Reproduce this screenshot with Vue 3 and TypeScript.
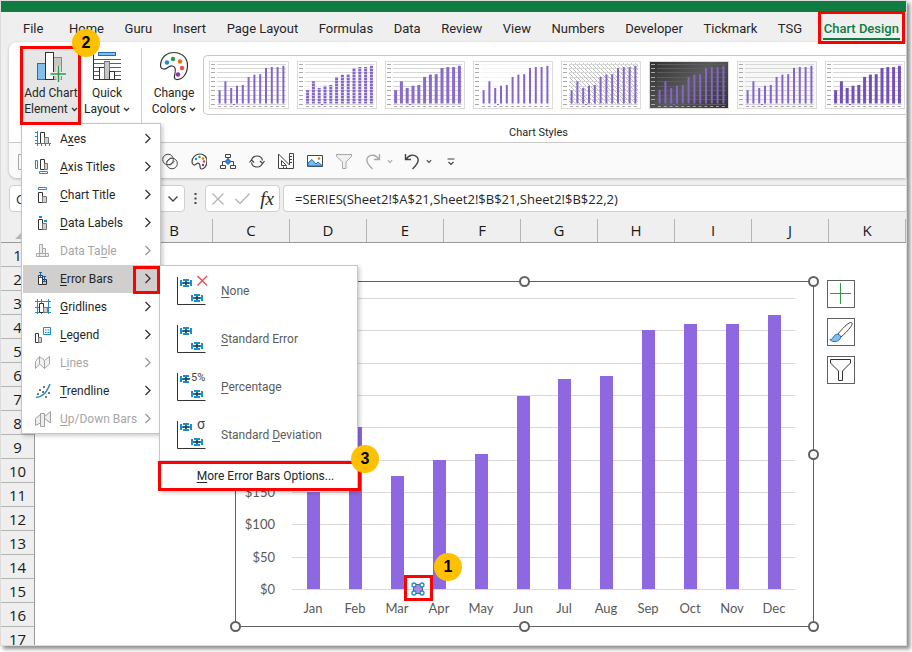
<script setup lang="ts">
interface MenuItem { before: string; key: string; after: string; icon: string; disabled?: boolean; open?: boolean }
interface SubItem { before: string; key: string; after: string; mark: 'cross' | 'none' | 'percent' | 'sigma' }
interface ThumbStyle { name: string; kind: string; barWidth: number }

const tabs: string[] = ['File', 'Home', 'Guru', 'Insert', 'Page Layout', 'Formulas', 'Data', 'Review', 'View', 'Numbers', 'Developer', 'Tickmark', 'TSG']

const icons: Record<string, string> = {
  axes: `<path d="M2.5 0v15M0 12.500H16M0 1.500H3M0 5.500H3M0 9.500H3M6.500 12V15M10.500 12V15M14.500 12V15" stroke="#1e8bcd" fill="none"/><path d="M5.500 12V1.500H9.500V12" fill="#fff" stroke="#333"/><path d="M9.500 12V6.500H13.500V12" fill="#d0d0d0" stroke="#777"/>`,
  axisTitles: `<path d="M.5 1.500H2.500V9.500H.5ZM4.500 12.500H12.500V14.500H4.500Z" stroke="#1e8bcd" fill="#fff"/><path d="M5.500 10.500V.5H9.500V10.500Z" fill="#fff" stroke="#333"/><path d="M9.500 10.500V4.500H12.500V10.500Z" fill="#d0d0d0" stroke="#777"/>`,
  chartTitle: `<path d="M3.500 .5H11.500V2.500H3.500Z" stroke="#1e8bcd" fill="#fff"/><path d="M3.500 15.500V5.500H7.500V15.500Z" fill="#fff" stroke="#333"/><path d="M7.500 15.500V9.500H11.500V15.500Z" fill="#d0d0d0" stroke="#777"/>`,
  dataLabels: `<path d="M4 1H7V3H4ZM9 5H12V7H9Z" fill="#1e8bcd"/><path d="M3.500 14.500V4.500H7.500V14.500Z" fill="#fff" stroke="#333"/><path d="M7.500 14.500V8.500H11.500V14.500Z" fill="#d0d0d0" stroke="#777"/>`,
  dataTable: `<path d="M4.500 10.500V1.500H7.500V10.500ZM7.500 10.500V5.500H10.500V10.500ZM1.500 10.500H13.500V13.500H1.500ZM4.500 10.500V13.500M10.500 10.500V13.500" fill="#eee" stroke="#aaa"/>`,
  errorBars: `<path d="M3.500 13.500V4.500H7.500V13.500Z" fill="#fff" stroke="#333"/><path d="M7.500 13.500V8.500H11.500V13.500Z" fill="#c4c4c4" stroke="#333"/><path d="M5.500 1V7M4 1.500H7M4 6.500H7M9.500 5V11M8 5.500H11M8 10.500H11" stroke="#185fae"/>`,
  gridlines: `<path d="M2.500 0V15M6.500 0V15M13.500 0V15M0 2.500H16M0 8.500H16M0 13.500H16" stroke="#1e8bcd"/><path d="M4.500 13.500V4.500H8.500V13.500Z" fill="#fff" stroke="#333"/><path d="M8.500 13.500V8.500H12.500V13.500Z" fill="#d0d0d0" stroke="#777"/>`,
  legend: `<path d="M.5 15.500V6.500H3.500V15.500Z" fill="#fff" stroke="#333"/><path d="M3.500 15.500V10.500H6.500V15.500Z" fill="#d0d0d0" stroke="#777"/><path d="M8.500 .5H15.500V7.500H8.500Z" fill="#fff" stroke="#1e8bcd"/><path d="M10 3H11.500M12.500 3H14.500M10 5.500H11.500M12.500 5.500H14.500" stroke="#1e8bcd"/>`,
  lines: `<path d="M.5 6.500L4.500 1.500L9.500 5.500L14.500 1.500V9L9.500 13.500L4.500 9L.5 13.500ZM4.500 1.500V9M9.500 5.500V13.500" fill="#f2f2f2" stroke="#a6a6a6"/>`,
  trendline: `<path d="M1 14.500C8 13.500 11.500 10 15 1" fill="none" stroke="#1e8bcd" stroke-width="1.500"/><path d="M2 10H4V12H2ZM4 6H6V8H4ZM8 3H10V5H8ZM7 8H9V10H7ZM10 13H12V15H10ZM13 9H15V11H13Z" fill="#777"/>`,
  upDown: `<path d="M.5 7.500L5.500 3.500V12L.5 14.500ZM5.500 2.500H9.500V15.500H5.500ZM9.500 5.500L15.500 .5V12L9.500 7.500Z" fill="#eee" stroke="#a0a0a0"/>`,
}

const menu: MenuItem[] = [
  { before: 'A', key: 'x', after: 'es', icon: 'axes' },
  { before: '', key: 'A', after: 'xis Titles', icon: 'axisTitles' },
  { before: '', key: 'C', after: 'hart Title', icon: 'chartTitle' },
  { before: '', key: 'D', after: 'ata Labels', icon: 'dataLabels' },
  { before: 'Data Ta', key: 'b', after: 'le', icon: 'dataTable', disabled: true },
  { before: '', key: 'E', after: 'rror Bars', icon: 'errorBars', open: true },
  { before: '', key: 'G', after: 'ridlines', icon: 'gridlines' },
  { before: '', key: 'L', after: 'egend', icon: 'legend' },
  { before: 'L', key: 'i', after: 'nes', icon: 'lines', disabled: true },
  { before: '', key: 'T', after: 'rendline', icon: 'trendline' },
  { before: '', key: 'U', after: 'p/Down Bars', icon: 'upDown', disabled: true },
]

const submenu: SubItem[] = [
  { before: '', key: 'N', after: 'one', mark: 'cross' },
  { before: '', key: 'S', after: 'tandard Error', mark: 'none' },
  { before: '', key: 'P', after: 'ercentage', mark: 'percent' },
  { before: 'Standard ', key: 'D', after: 'eviation', mark: 'sigma' },
]

const quickTools: { name: string; art: string }[] = [
  { name: 'Merge shapes', art: `<circle cx="6" cy="6.500" r="5.300" /><circle cx="10" cy="10.500" r="5.300"/><path d="M4.500 9L9 4.500M8 12.500L12.500 8"/>` },
  { name: 'Colors', art: `<path d="M1 9C1 4 5 1 9 1c4 0 7 3 7 7 0 5-3 8-5.500 8C8 16 10 12 8 10.500 6 9 5 12.500 3 12 1.500 11.500 1 10.500 1 9Z" stroke-width="1.200"/><g stroke="none"><circle cx="5" cy="6" r="1.200" fill="#1e8bcd"/><circle cx="8.500" cy="4" r="1.200" fill="#2b9a4b"/><circle cx="12" cy="5.500" r="1.200" fill="#e8710a"/><circle cx="13" cy="8.500" r="1.200" fill="#e03c31"/><circle cx="12" cy="12" r="1.200" fill="#9131a8"/></g>` },
  { name: 'Hierarchy', art: `<path d="M5.500 1.500h5v3h-5zM.5 12.500h5v3h-5zM10.500 12.500h5v3h-5zM8 4.500v2M2.500 12V8.500H13.500V12"/><path d="M8 5.500L11 8.500 8 11.500 5 8.500Z" fill="#2b88d8" stroke="#1565ad"/>` },
  { name: 'Refresh', art: `<path d="M2.500 7.500C3 4.500 5.500 3 8 3s5 1.500 5.500 4.500M13.500 9.500C13 12.500 10.500 14 8 14s-5-1.500-5.500-4.500M.5 9.500L2.500 7 5 9.500M11 8L13.500 10.500 15.500 8" stroke-width="1.200"/>` },
  { name: 'Ruler', art: `<path d="M.5 1V15.500H15.500V.5H11.500V12L.5 1ZM3.500 7.500V12.500H8.500ZM12 3.500h2M12 6.500h2M12 9.500h2M5.500 13.500v2M8.500 13.500v2"/>` },
  { name: 'Picture', art: `<path d="M.5 2.500h15v11H.5z" fill="#fff"/><path d="M1 13V10L5 6.500 9 11 11 9 15 12.500V13Z" fill="#7db9e8" stroke="#1e6fb8"/><circle cx="12" cy="5.500" r="1.300" fill="#e8710a" stroke="none"/>` },
]

const thumbs: ThumbStyle[] = [
  { name: 'Style 1', kind: 'plain', barWidth: 2 },
  { name: 'Style 2', kind: 'striped', barWidth: 3 },
  { name: 'Style 3', kind: 'wide', barWidth: 3 },
  { name: 'Style 4', kind: 'clean', barWidth: 2 },
  { name: 'Style 5', kind: 'hatched', barWidth: 2 },
  { name: 'Style 6', kind: 'dark', barWidth: 2 },
  { name: 'Style 7', kind: 'soft', barWidth: 2 },
  { name: 'Style 8', kind: 'deep', barWidth: 3 },
]

const sales: { month: string; value: number }[] = [
  { month: 'Jan', value: 150 }, { month: 'Feb', value: 250 }, { month: 'Mar', value: 175 },
  { month: 'Apr', value: 200 }, { month: 'May', value: 209 }, { month: 'Jun', value: 299 },
  { month: 'Jul', value: 325 }, { month: 'Aug', value: 330 }, { month: 'Sep', value: 400 },
  { month: 'Oct', value: 410 }, { month: 'Nov', value: 410 }, { month: 'Dec', value: 424 },
]
const levels = Array.from({ length: 10 }, (_, i) => i * 50)
const base = 308
const yOf = (value: number) => Math.round(base - (value * 291) / 450)
const barX = (i: number) => Math.round(72 + i * 41.9)
const handles = [[0, 0], [289, 0], [578, 0], [0, 173], [578, 173], [0, 345], [289, 345], [578, 345]]
const pointHandles = [[-4, -4], [4, -4], [-4, 4], [4, 4]]

const thumbY = (value: number) => 42.5 - (value * 40) / 450
const columns = ['A', 'B', 'C', 'D', 'E', 'F', 'G', 'H', 'I', 'J', 'K']
</script>

<template>
  <div class="page">
    <div class="window">
      <div class="titlebar"></div>
      <nav class="tabs">
        <a v-for="t in tabs" :key="t" href="#" class="tab">{{ t }}</a>
        <a href="#" class="tab active">Chart Design<span class="callout"></span></a>
      </nav>

      <section class="ribbon">
        <div class="ribbon-main">
          <div class="add-wrap">
            <button class="big pressed">
              <svg width="30" height="32" viewBox="0 0 30 32">
                <rect x="1.500" y="12.500" width="8" height="16" fill="#83beec" stroke="#1e6fb8" />
                <rect x="17.500" y="6.500" width="8" height="22" fill="#c8c6c4" stroke="#8a8886" />
                <rect x="9.500" y="1.500" width="8" height="27" fill="#fff" stroke="#333" />
                <path d="M22.500 15V31M14.500 23H30" stroke="#ececec" stroke-width="4" />
                <path d="M22.500 15V31M14.500 23H30" stroke="#2b9a4b" stroke-width="1.500" />
              </svg>
              <span>Add Chart</span>
              <span>Element <svg class="chev" viewBox="0 0 7 5"><path d="M1 1L3.500 3.500 6 1" /></svg></span>
            </button>
            <span class="callout"></span>
            <span class="badge b2">2</span>

            <ul class="menu">
              <li v-for="m in menu" :key="m.icon" class="menu-item" :class="{ open: m.open }">
                <button class="menu-btn" :disabled="m.disabled">
                  <svg width="16" height="16" viewBox="0 0 16 16" v-html="icons[m.icon]"></svg>
                  <span class="menu-label">{{ m.before }}<u>{{ m.key }}</u>{{ m.after }}</span>
                  <svg class="arrow" width="8" height="11" viewBox="0 0 8 11"><path d="M1.500 1L6 5.500 1.500 10" /></svg>
                </button>
                <template v-if="m.open">
                  <span class="callout"></span>
                  <div class="submenu">
                    <button v-for="s in submenu" :key="s.mark" class="sub-btn">
                      <svg width="32" height="32" viewBox="0 0 32 32">
                        <path d="M.5 2V29.500H28.500" fill="none" stroke="#333" />
                        <g v-for="p in [[3, 4], [14, 19]]" :key="p[0]" :transform="`translate(${p[0]} ${p[1]})`">
                          <path d="M1 1V7M11 1V7M3 1H9M3 7H9M6 1V7M1 4H11" stroke="#1e8bcd" stroke-width="2" fill="none" />
                          <path d="M3 4H9M6 2V6" stroke="#333" />
                        </g>
                        <path v-if="s.mark === 'cross'" d="M20.500 1L30 10.500M30 1L20.500 10.500" stroke="#e8484b" stroke-width="1.300" />
                        <template v-else-if="s.mark === 'percent'">
                          <rect x="13" y="0" width="18" height="13" fill="#fff" />
                          <text x="14" y="10" font-size="11" fill="#444">5%</text>
                        </template>
                        <text v-else-if="s.mark === 'sigma'" x="20" y="10" font-size="14" fill="#444">σ</text>
                      </svg>
                      <span>{{ s.before }}<u>{{ s.key }}</u>{{ s.after }}</span>
                    </button>
                    <div class="more-wrap">
                      <button class="more"><span><u>M</u>ore Error Bars Options...</span></button>
                      <span class="callout"></span>
                      <span class="badge b3">3</span>
                    </div>
                  </div>
                </template>
              </li>
            </ul>
          </div>

          <button class="big">
            <svg width="30" height="32" viewBox="0 0 30 32">
              <path d="M1 8.500H29M1 12.500H29M1 16.500H29M1 20.500H29M1 24.500H29" stroke="#1e6fb8" />
              <rect x="6.500" y="1.500" width="17" height="3" fill="#83beec" stroke="#1e6fb8" />
              <rect x="7.500" y="16.500" width="5" height="12" fill="#fff" stroke="#333" />
              <rect x="12.500" y="10.500" width="5" height="18" fill="#c8c6c4" stroke="#777" />
              <rect x="17.500" y="20.500" width="5" height="8" fill="#fff" stroke="#333" />
              <path d="M1.500 1V28.500H29" fill="none" stroke="#333" />
            </svg>
            <span>Quick</span>
            <span>Layout <svg class="chev" viewBox="0 0 7 5"><path d="M1 1L3.500 3.500 6 1" /></svg></span>
          </button>
          <div class="divider"></div>
          <button class="big colors">
            <svg width="30" height="32" viewBox="0 0 30 32">
              <path d="M1.500 14C2 6 8 1.500 15 1.500c8 0 13.500 5.500 13.500 13C28.500 22 24 29 17.500 28.500c-5-1 .5-7-1.500-11.500-1-2.500-4-2.500-6.500-1C6 19 1.500 19 1.500 14Z" fill="#fafafa" stroke="#333" stroke-width="1.200" />
              <circle cx="8" cy="11.500" r="2.200" fill="#1e8bcd" /><circle cx="14" cy="8" r="2.200" fill="#2b9a4b" />
              <circle cx="21" cy="10.500" r="2.200" fill="#e8710a" /><circle cx="23" cy="17" r="2.200" fill="#f04a4a" />
              <circle cx="19" cy="23.500" r="2.200" fill="#9131a8" />
            </svg>
            <span>Change</span>
            <span>Colors <svg class="chev" viewBox="0 0 7 5"><path d="M1 1L3.500 3.500 6 1" /></svg></span>
          </button>

          <div class="styles">
            <div class="gallery">
              <button v-for="(t, n) in thumbs" :key="t.name" class="thumb" :class="t.kind" :aria-label="t.name">
                <svg width="80" height="48" viewBox="0 0 80 48">
                  <defs>
                    <pattern :id="`hatch${n}`" width="4" height="4" patternUnits="userSpaceOnUse">
                      <path d="M0 0L4 4" stroke="#c4c4c4" stroke-width="1" />
                    </pattern>
                  </defs>
                  <rect v-if="t.kind === 'hatched'" x="8" y="2" width="69" height="41" :fill="`url(#hatch${n})`" />
                  <g class="grid">
                    <rect v-for="l in levels" :key="l" x="8" :y="Math.round(thumbY(l))" width="69" height="1" />
                  </g>
                  <g class="ticks">
                    <rect v-for="l in levels" :key="l" x="2" :y="Math.round(thumbY(l))" width="4" height="1" />
                    <rect v-for="(s, i) in sales" :key="s.month" :x="9 + i * 5.8" y="45" width="3" height="1" />
                  </g>
                  <g class="bars">
                    <rect v-for="(s, i) in sales" :key="s.month" :x="10.600 + i * 5.8 - t.barWidth / 2" :y="thumbY(s.value)" :width="t.barWidth" :height="42.500 - thumbY(s.value)" />
                    <rect x="24" y="43" width="2" height="1" />
                  </g>
                  <path v-if="t.kind === 'striped'" d="M8 16.500H77M8 19.500H77M8 22.500H77M8 25.500H77M8 28.500H77M8 31.500H77M8 34.500H77M8 37.500H77M8 40.500H77M8 13.500H77M8 10.500H77M8 7.500H77" stroke="#fff" stroke-opacity="0.500" />
                </svg>
              </button>
            </div>
            <div class="group-label">Chart Styles</div>
          </div>
        </div>

        <div class="quick">
          <button class="tool first" aria-label="Save"><svg width="16" height="16" viewBox="0 0 16 16"><path d="M.5 .5H13L15.500 3V15.500H.5Z" stroke="#aaa" /></svg></button>
          <button v-for="q in quickTools" :key="q.name" class="tool" :aria-label="q.name">
            <svg width="16" height="17" viewBox="0 0 16 17" v-html="q.art"></svg>
          </button>
          <button class="tool faded" aria-label="Filter"><svg width="16" height="17" viewBox="0 0 16 17"><path d="M.5 1.500H15.500V3.500L10 9V15.500H6.500V9L.5 3.500Z" fill="#f0f0f0" /></svg></button>
          <button class="tool faded" aria-label="Redo"><svg width="16" height="17" viewBox="0 0 16 17"><path d="M14.500 1V6.500H9M14 6.500C11 1.500 6 1 3 4 0 7.500 2 11 7.500 16" stroke-width="1.300" /></svg></button>
          <button class="tool drop faded" aria-label="Redo list"><svg width="7" height="5" viewBox="0 0 7 5"><path d="M1 1L3.500 3.500 6 1" stroke-width="1.300" /></svg></button>
          <button class="tool undo" aria-label="Undo"><svg width="16" height="17" viewBox="0 0 16 17"><path d="M1.500 1V6.500H7M2 6.500C5 1.500 10 1 13 4c3 3.500 1 7-4.500 12" stroke-width="1.400" /></svg></button>
          <button class="tool drop" aria-label="Undo list"><svg width="7" height="5" viewBox="0 0 7 5"><path d="M1 1L3.500 3.500 6 1" stroke-width="1.300" /></svg></button>
          <button class="tool last" aria-label="Customize toolbar"><svg width="8" height="8" viewBox="0 0 8 8"><path d="M.5 1H7.500M1.500 4L4 6.500 6.500 4" stroke-width="1.200" /></svg></button>
        </div>
      </section>

      <section class="formula-row">
        <div class="field name-box">
          <input value="Chart 1" aria-label="Name box" />
          <button aria-label="Names"><svg width="12" height="8" viewBox="0 0 12 8"><path d="M1.500 1.500L6 6 10.500 1.500" stroke="#444" stroke-width="1.400" fill="none" /></svg></button>
        </div>
        <svg class="dots" width="3" height="13" viewBox="0 0 3 13"><path d="M.5 1h2v2h-2zM.5 5.500h2v2h-2zM.5 10h2v2h-2z" fill="#444" /></svg>
        <div class="field fx">
          <button aria-label="Cancel"><svg width="14" height="14" viewBox="0 0 14 14"><path d="M1.500 1.500L12.500 12.500M12.500 1.500L1.500 12.500" stroke="#b4b4b4" stroke-width="1.300" /></svg></button>
          <button aria-label="Enter"><svg width="17" height="13" viewBox="0 0 17 13"><path d="M1.500 7L6 11.500 15.500 1.500" stroke="#b4b4b4" stroke-width="1.300" fill="none" /></svg></button>
          <button class="fx-btn">fx</button>
        </div>
        <div class="field formula">
          <input value="=SERIES(Sheet2!$A$21,Sheet2!$B$21,Sheet2!$B$22,2)" aria-label="Formula bar" />
        </div>
      </section>

      <section class="sheet">
        <div class="col-heads">
          <div class="corner"></div>
          <div v-for="c in columns" :key="c" class="col" :class="{ first: c === 'A' }">{{ c }}</div>
        </div>
        <div class="sheet-body">
          <div class="row-heads">
            <div v-for="r in 17" :key="r" class="row-head">{{ r }}</div>
          </div>
          <div class="canvas">
            <div class="chart-object">
              <svg class="chart" width="579" height="346" viewBox="0 0 579 346">
                <rect x="0.500" y="0.500" width="578" height="345" fill="#fff" stroke="#606060" />
                <g v-for="l in levels" :key="l">
                  <rect x="57" :y="yOf(l)" width="503" height="1" fill="#d9d9d9" />
                  <text x="40" :y="yOf(l) + 5" text-anchor="end">${{ l }}</text>
                </g>
                <g v-for="(s, i) in sales" :key="s.month">
                  <rect :x="barX(i)" :y="yOf(s.value)" width="13" :height="base - yOf(s.value)" fill="#8e68e0" />
                  <text :x="barX(i) + 6" y="332" text-anchor="middle">{{ s.month }}</text>
                </g>
                <rect x="178.500" y="303.500" width="9" height="9" fill="#a98ae8" stroke="#666" />
                <circle v-for="(h, i) in pointHandles" :key="`p${i}`" :cx="183 + h[0]" :cy="308 + h[1]" r="2" fill="#fff" stroke="#1e8bcd" stroke-width="1.300" />
                <circle v-for="(h, i) in handles" :key="i" :cx="h[0] + 0.5" :cy="h[1] + 0.5" r="4.500" fill="#fff" stroke="#606060" stroke-width="2" />
              </svg>
              <span class="callout point-callout"></span>
              <span class="badge b1">1</span>
              <div class="side">
                <button aria-label="Chart elements"><svg width="26" height="26" viewBox="0 0 26 26"><path d="M12.500 2V23M2 12.500H23" stroke="#2b9a4b" /></svg></button>
                <button aria-label="Chart styles">
                  <svg width="26" height="26" viewBox="0 0 26 26">
                    <path d="M10 15C14 10 19 4.500 22.500 3.500 25 3.500 24 6 23 7.500 20 11.500 16.500 15 13 18Z" fill="#fff" stroke="#444" />
                    <path d="M2 20.500C5 20.500 5 18 6.500 16.500 8.500 14.500 12 15 12.500 17.500 13 21 9 23 6 22.500 4 22.500 2.500 21.500 2 20.500Z" fill="#83beec" stroke="#1e6fb8" />
                  </svg>
                </button>
                <button aria-label="Chart filters"><svg width="26" height="26" viewBox="0 0 26 26"><path d="M2.500 2.500H22.500V6L14.500 14V23.500H10.500V14L2.500 6Z" fill="#fafafa" stroke="#333" /></svg></button>
              </div>
            </div>
          </div>
        </div>
      </section>
    </div>
  </div>
</template>

<style>
body { margin: 0; background: #fff; }
</style>

<style scoped>
* { box-sizing: border-box; }
.page { height: 100vh; padding: 1px 6px 7px 1px; overflow: hidden; font-family: Roboto, "Open Sans", sans-serif; color: #262626; }
button { font: inherit; color: inherit; background: none; border: 0; padding: 0; margin: 0; display: flex; align-items: center; justify-content: center; }
u { text-decoration: underline; text-underline-offset: 2px; text-decoration-thickness: 1px; }
.window { height: 100%; display: flex; flex-direction: column; background: #efefef; box-shadow: 0 0 0 1px #dcdcdc, 3px 3px 4px 1px rgba(0, 0, 0, .45); }
.titlebar { height: 11px; flex: none; background: #107c41; }

.tabs { display: flex; justify-content: space-between; align-items: center; height: 30px; flex: none; padding: 5px 6px 0 22px; font-size: 13px; line-height: 18px; white-space: nowrap; }
.tab { color: #262626; text-decoration: none; border-bottom: 2px solid transparent; }
.tab:first-child { margin-right: 5px; }
.tab.active { position: relative; z-index: 8; padding: 0 1px; color: #107c41; font-weight: 500; border-color: #107c41; }
.tab.active .callout { inset: -9px -5px -6px -5px; }

.callout { position: absolute; border: 3px solid #f00; pointer-events: none; z-index: 3; }
.badge { position: absolute; z-index: 6; width: 28px; height: 28px; border-radius: 50%; background: #ffc000; color: #000; font: bold 16px/28px "Liberation Sans", Arial, sans-serif; text-align: center; }

.ribbon { flex: none; margin-left: 8px; position: relative; z-index: 7; background: #fff; border-radius: 8px 0 0 8px; box-shadow: 0 1px 3px rgba(0, 0, 0, .25); }
.ribbon-main { display: flex; height: 101px; padding: 1px 0 0 13px; border-bottom: 1px solid #c8c8c8; }
.add-wrap { position: relative; width: 58px; flex: none; padding-top: 4px; }
.add-wrap > .callout { inset: 3px -1px 17px -2px; z-index: 11; }
.b2 { left: 50px; top: -14px; z-index: 12; }
.big { width: 54px; flex: none; flex-direction: column; justify-content: flex-start; padding-top: 8px; font-size: 12px; line-height: 16px; white-space: nowrap; }
.big > svg { margin-bottom: 2px; }
.big.pressed { width: 58px; height: 76px; padding-top: 4px; background: #e6e6e6; }
.big.colors { width: 61px; padding-left: 3px; }
.chev { width: 7px; height: 5px; margin-bottom: 1px; fill: none; stroke: #333; stroke-width: 1.3; }
.divider { width: 1px; margin: 5px 0 0 7px; background: #d0d0d0; flex: none; }
.styles { flex: 1; min-width: 0; padding-top: 12px; }
.gallery { display: flex; gap: 8px; height: 60px; padding: 5px; border: 1px solid #c8c8c8; border-right: 0; border-radius: 5px 0 0 5px; overflow: hidden; }
.group-label { padding: 9px 32px 0 0; text-align: center; font-size: 11px; line-height: 18px; }
.thumb { flex: none; width: 80px; height: 48px; background: #fff; outline: 1px solid #dcdcdc; outline-offset: -1px; }
.grid { fill: #d6d6d6; }
.ticks { fill: #a8a8a8; }
.bars { fill: #8664cc; }
.clean .grid { fill: #f4f4f4; }
.wide .bars { fill: #8a6acb; }
.dark { background: linear-gradient(135deg, #303030, #5a5a5a 50%, #303030); }
.dark .grid { fill: #5c5c5c; }
.soft { background: #f7f7f7; }
.deep .bars { fill: #7450b8; }

.quick { display: flex; align-items: center; height: 35px; padding-top: 2px; background: #fafafa; border-radius: 0 0 0 8px; }
.tool { width: 29px; height: 24px; flex: none; }
.tool svg { fill: none; stroke: #444; }
.tool.first { margin: 0 121px 0 3px; justify-content: flex-start; padding-left: 6px; width: 22px; }
.tool.faded svg { stroke: #a8a8a8; }
.tool.drop { width: 6px; }
.tool.undo { margin-left: 4px; }
.tool.last { margin-left: 4px; }

.formula-row { display: flex; flex: none; height: 35px; padding: 7px 0 0 8px; }
.field { display: flex; align-items: center; height: 27px; background: #fff; border: 1px solid #cfcfcf; border-radius: 4px; }
.field input { border: 0; background: none; padding: 0; min-width: 0; flex: 1; outline: 0; color: #262626; font: 13px/20px "Open Sans", sans-serif; }
.name-box { width: 176px; padding: 0 5px 0 6px; }
.dots { margin: 7px 8px 0 9px; }
.fx { width: 75px; justify-content: space-between; padding: 0 5px 0 5px; }
.fx-btn { font: italic 19px/20px "Liberation Serif", serif; }
.formula { flex: 1; margin-left: 3px; padding-left: 11px; border-right: 0; border-radius: 4px 0 0 4px; }

.sheet { flex: 1; min-height: 0; display: flex; flex-direction: column; overflow: hidden; font-family: "Open Sans", "Noto Sans", sans-serif; font-size: 15px; color: #1a1a1a; }
.col-heads { display: flex; flex: none; height: 30px; padding-top: 6px; border-bottom: 1px solid #999; }
.corner { width: 34px; flex: none; }
.corner::after { content: ""; display: block; width: 0; height: 0; margin: 6px 0 0 14px; border-left: 14px solid transparent; border-bottom: 14px solid #b8b8b8; }
.col { width: 77px; flex: none; text-align: center; line-height: 22px; border-right: 1px solid #b4b4b4; }
.col.first { width: 101px; }
.sheet-body { display: flex; flex: 1; min-height: 0; background: #fff; }
.row-heads { width: 34px; flex: none; background: #efefef; border-right: 1px solid #999; }
.row-head { height: 24px; line-height: 24px; text-align: center; border-bottom: 1px solid #b4b4b4; }
.canvas { position: relative; flex: 1; }
.chart-object { position: absolute; left: 200px; top: 38px; }
.chart { display: block; overflow: visible; font: 13px Lato, sans-serif; fill: #595959; }
.point-callout { left: 169px; top: 294px; width: 29px; height: 26px; }
.b1 { left: 199px; top: 272px; z-index: 3; }
.side { position: absolute; left: 592px; top: -1px; display: flex; flex-direction: column; gap: 10px; }
.side button { width: 28px; height: 28px; background: #fff; border: 1px solid #606060; }

.menu { position: absolute; left: -1px; top: 80px; z-index: 10; width: 140px; margin: 0; padding: 1px 0 0 1px; list-style: none; background: #fff; border: 1px solid #c6c6c6; box-shadow: 2px 2px 4px rgba(0, 0, 0, .2); font-size: 12px; }
.menu-item { position: relative; }
.menu-btn { width: 100%; height: 28px; padding: 0 8px 1px 12px; justify-content: flex-start; }
.menu-btn:disabled { color: #a6a6a6; }
.menu-label { flex: 1; margin-left: 9px; text-align: left; white-space: nowrap; }
.arrow { flex: none; fill: none; stroke: #333; stroke-width: 1.3; }
.menu-btn:disabled .arrow { stroke: #999; }
.open > .menu-btn { background: #d0cfce; }
.open > .callout { right: 0; top: 1px; width: 27px; height: 28px; z-index: 12; }
.submenu { position: absolute; left: calc(100% - 1px); top: 0; width: 199px; padding-top: 1px; background: #fff; border: 1px solid #c6c6c6; box-shadow: 2px 2px 4px rgba(0, 0, 0, .2); color: #5c5c5c; }
.sub-btn { width: 100%; height: 48px; padding-left: 17px; justify-content: flex-start; gap: 12px; white-space: nowrap; }
.sub-btn svg { overflow: visible; }
.more-wrap { position: relative; margin-top: 1px; border-top: 1px solid #d8d8d8; }
.more { width: 100%; height: 29px; color: #262626; padding-left: 14px; white-space: nowrap; }
.more-wrap .callout { inset: 0 -4px -1px -2px; }
.b3 { right: -22px; top: -16px; }
</style>
